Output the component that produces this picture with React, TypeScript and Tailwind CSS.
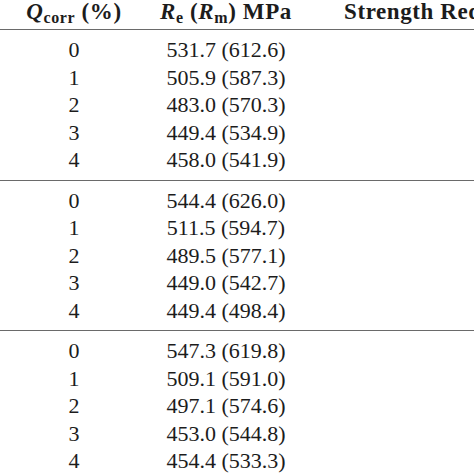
import React from "react";

const groups: [string, string][][] = [
  [
    ["0", "531.7 (612.6)"],
    ["1", "505.9 (587.3)"],
    ["2", "483.0 (570.3)"],
    ["3", "449.4 (534.9)"],
    ["4", "458.0 (541.9)"],
  ],
  [
    ["0", "544.4 (626.0)"],
    ["1", "511.5 (594.7)"],
    ["2", "489.5 (577.1)"],
    ["3", "449.0 (542.7)"],
    ["4", "449.4 (498.4)"],
  ],
  [
    ["0", "547.3 (619.8)"],
    ["1", "509.1 (591.0)"],
    ["2", "497.1 (574.6)"],
    ["3", "453.0 (544.8)"],
    ["4", "454.4 (533.3)"],
  ],
];

export default function App() {
  return (
    <div
      className="w-[474px] h-[474px] overflow-hidden bg-white text-[#1c1c1c] text-[22px]"
      style={{ fontFamily: '"Liberation Serif", "DejaVu Serif", serif' }}
    >
      <div className="grid grid-cols-[148px_156px_170px] h-[29px] font-bold text-[23px] tracking-[0.6px] leading-[24px] whitespace-nowrap">
        <div className="text-center">
          <i>Q</i>
          <sub className="text-[16px]">corr</sub> (%)
        </div>
        <div className="text-center">
          <i>R</i>
          <sub className="text-[16px]">e</sub> (<i>R</i>
          <sub className="text-[16px]">m</sub>) MPa
        </div>
        <div className="pl-[40px] overflow-hidden">Strength Reduction</div>
      </div>
      {groups.map((g, gi) => (
        <div key={gi} className="border-t-[1.5px] border-[#6a6a6a] py-[6px]">
          {g.map(([q, v], ri) => (
            <div key={ri} className="grid grid-cols-[148px_156px_170px] leading-[27.5px]">
              <div className="text-center">{q}</div>
              <div className="text-center">{v}</div>
              <div />
            </div>
          ))}
        </div>
      ))}
    </div>
  );
}
